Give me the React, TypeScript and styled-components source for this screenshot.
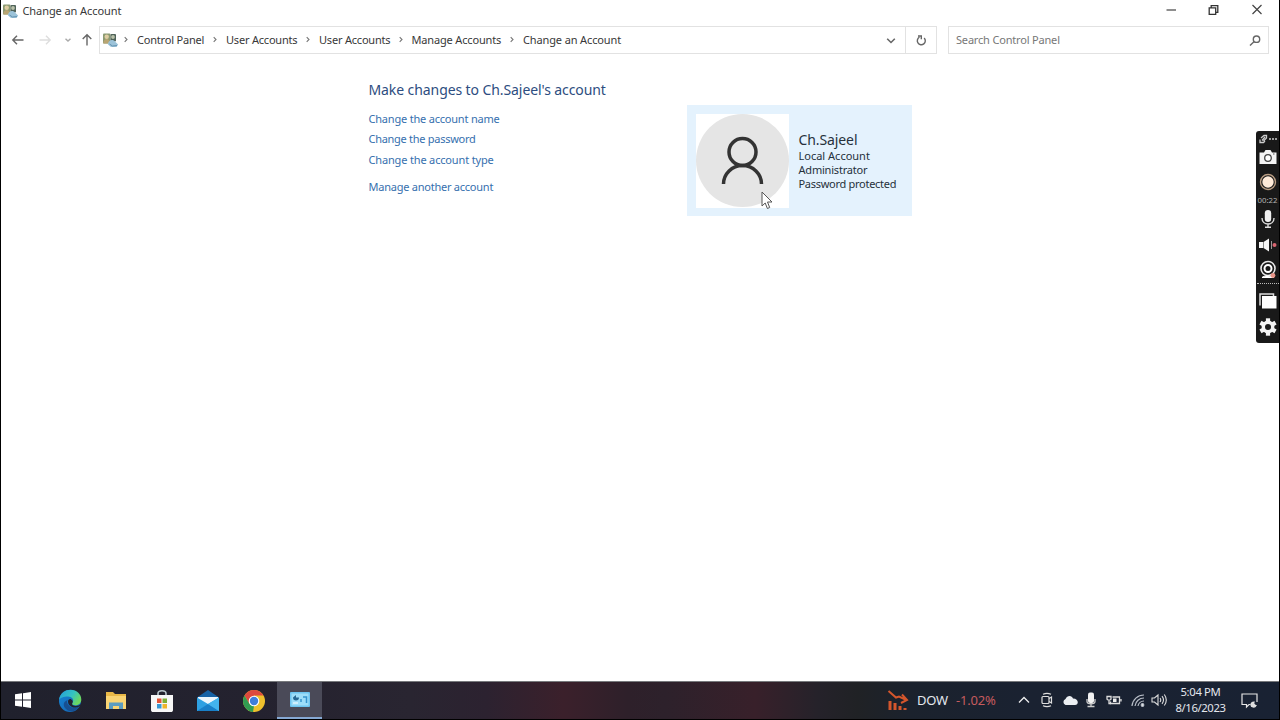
import React from 'react';
import styled, { createGlobalStyle } from 'styled-components';

const GlobalStyle = createGlobalStyle`
  *, *::before, *::after { box-sizing: border-box; }
  body { margin: 0; background: #000; overflow: hidden; }
  svg { display: block; flex: none; }
`;

const Screen = styled.div`
  position: relative;
  width: 1280px;
  height: 720px;
  display: flex;
  flex-direction: column;
  padding: 0 1px 1px;
  background: #000;
  font-family: "Noto Sans", "Open Sans", sans-serif;
  font-size: 11px;
  color: #383838;
`;

const Window = styled.div`
  height: 681px;
  flex: none;
  display: flex;
  flex-direction: column;
  background: #fff;
`;

const Label = styled.span<{ $spacing?: number }>`
  white-space: nowrap;
  letter-spacing: ${(p) => p.$spacing ?? 0}px;
`;

const TitleBar = styled.header`
  height: 22px;
  display: flex;
  align-items: center;
  padding-left: 1px;
  gap: 3.5px;
  line-height: 22px;
`;

const WindowButtons = styled.div`
  display: flex;
  align-items: center;
  margin-left: auto;
  padding: 0 16px 2px 0;
  gap: 31px;
`;

const NavBar = styled.nav`
  height: 32px;
  display: flex;
  align-items: flex-end;
  padding-right: 10px;
`;

const NavArrows = styled.div`
  width: 98px;
  height: 28px;
  flex: none;
  display: flex;
  align-items: center;
  padding-left: 10px;
`;

const ArrowSlot = styled.span<{ $width: number }>`
  width: ${(p) => p.$width}px;
  display: flex;
`;

const AddressBox = styled.div`
  width: 838px;
  height: 28px;
  display: flex;
  align-items: center;
  border: 1px solid #e2e2e2;
  padding-left: 2px;
`;

const Crumb = styled.span<{ $width: number }>`
  width: ${(p) => p.$width}px;
  flex: none;
  display: flex;
  align-items: center;
  gap: 9px;
  line-height: 16px;
  padding-bottom: 1px;
`;

const DropButton = styled.span`
  margin-left: auto;
  width: 28px;
  display: flex;
  justify-content: center;
`;

const RefreshButton = styled.span`
  width: 31px;
  height: 26px;
  display: flex;
  align-items: center;
  justify-content: center;
  border-left: 1px solid #e2e2e2;
`;

const SearchBox = styled.div`
  width: 321px;
  height: 28px;
  margin-left: auto;
  display: flex;
  align-items: center;
  justify-content: space-between;
  border: 1px solid #e2e2e2;
  padding: 0 7px 1px;
  color: #777;
`;

const Content = styled.main`
  flex: 1;
  display: flex;
  align-items: flex-start;
  padding-left: 367.5px;
`;

const Tasks = styled.section`
  width: 318.5px;
  padding-top: 26px;
  display: flex;
  flex-direction: column;
`;

const Heading = styled.h1`
  margin: 0 0 8.500px;
  font-size: 14px;
  font-weight: 400;
  line-height: 20px;
  color: #2d4d80;
  white-space: nowrap;
  letter-spacing: -0.09px;
`;

const TaskLink = styled.a<{ $last?: boolean; $spacing?: number }>`
  height: 20.7px;
  line-height: 20.7px;
  margin-top: ${(p) => (p.$last ? 6 : 0)}px;
  color: #366fae;
  white-space: nowrap;
  letter-spacing: ${(p) => p.$spacing ?? -0.2}px;
`;

const AccountCard = styled.section`
  width: 225px;
  height: 111px;
  margin-top: 51px;
  display: flex;
  background: #e4f2fd;
  padding: 9px 0 0 9px;
`;

const Picture = styled.div`
  width: 93px;
  height: 94px;
  background: #fff;
  flex: none;
`;

const AccountInfo = styled.div`
  padding: 17px 0 0 9.500px;
  display: flex;
  flex-direction: column;
  line-height: 14px;
  color: #26313b;
`;

const AccountName = styled.span`
  font-size: 14px;
  line-height: 18px;
  letter-spacing: -0.1px;
`;

const Pointer = styled.div`
  position: absolute;
  left: 761px;
  top: 191px;
`;

const Recorder = styled.aside`
  position: absolute;
  left: 1256px;
  top: 131px;
  width: 23px;
  height: 212px;
  border-radius: 3px 0 0 3px;
  background: #191919;
  display: flex;
  flex-direction: column;
  align-items: center;
  color: #ddd;
`;

const RecorderItem = styled.span<{ $height: number }>`
  width: 23px;
  height: ${(p) => p.$height}px;
  flex: none;
  display: flex;
  align-items: center;
  justify-content: center;
`;

const RecorderTime = styled.span`
  height: 10px;
  font-size: 7.8px;
  line-height: 10px;
  color: #b5b5b5;
`;

const RecorderRule = styled.span`
  width: 22px;
  border-top: 1px dotted #bbb;
`;

const Taskbar = styled.footer`
  height: 38px;
  flex: none;
  display: flex;
  border-top: 1px solid #77797c;
  background: linear-gradient(90deg, #20212d 0%, #24222f 20%, #292531 32%, #2c2230 38%, #3b202b 44%, #2e202a 49%, #2d212b 52%, #38202a 59%, #25222a 64%, #202225 67%, #1b222d 71%, #1a2231 80%, #192233 100%);
  color: #e4e7ee;
`;

const TaskButton = styled.span<{ $active?: boolean }>`
  width: ${(p) => (p.$active ? 45 : 46)}px;
  height: 37px;
  display: flex;
  align-items: center;
  justify-content: center;
  background: ${(p) => (p.$active ? '#4a4a58' : 'transparent')};
  border-bottom: ${(p) => (p.$active ? '2px solid #86a9d4' : '0')};
`;

const StartButton = styled(TaskButton)`
  width: 46px;
  padding: 0 3px 1px 0;
`;

const Stocks = styled.div`
  margin-left: auto;
  width: 126px;
  display: flex;
  align-items: center;
  font-size: 13px;
  padding-bottom: 1px;
`;

const StockSymbol = styled.span`
  margin-left: 8px;
  width: 39px;
  letter-spacing: -0.2px;
`;

const StockChange = styled.span`
  color: #c65b5e;
  white-space: nowrap;
  letter-spacing: -0.2px;
`;

const Tray = styled.div`
  display: flex;
  align-items: center;
  padding-bottom: 1px;
`;

const TrayItem = styled.span<{ $width: number }>`
  width: ${(p) => p.$width}px;
  display: flex;
  justify-content: center;
`;

const Clock = styled.div`
  width: 61px;
  display: flex;
  flex-direction: column;
  align-items: center;
  font-size: 11.3px;
  line-height: 16.5px;
  white-space: nowrap;
`;

const Notifications = styled.span`
  width: 44px;
  margin-right: 4px;
  padding-right: 8px;
  display: flex;
  align-items: center;
  justify-content: center;
`;

function UsersIcon() {
  return (
    <svg width="17" height="16" viewBox="0 0 17 16">
      <rect x="1" y="1.500" width="7.500" height="10" rx="1" fill="#8b9a72" />
      <path d="M1.200 11.500c0-6 7-6 7 0z" fill="#b9a572" />
      <circle cx="4.700" cy="4.800" r="2.200" fill="#decda2" />
      <rect x="8.500" y="2" width="5.500" height="7.500" rx="1" fill="#4f6259" />
      <circle cx="11" cy="5" r="1.900" fill="#b9c1a9" />
      <path d="M6 12.500c0-4.500 5-6 7.500-2.500l2.700 2.500-1.700 2.500H9z" fill="#9cc3d9" />
      <path d="m7.500 12 3 2 4.500-.5" stroke="#6593b1" fill="none" />
    </svg>
  );
}

function CrumbChevron() {
  return (
    <svg width="4" height="7" viewBox="0 0 4 7" fill="none" stroke="#777" strokeWidth="1.1">
      <path d="M.7 1.200 3 3.500.7 5.800" />
    </svg>
  );
}

function Arrow({ rotate = 0, color = '#666' }: { rotate?: number; color?: string }) {
  return (
    <svg width="14" height="14" viewBox="0 0 14 14" fill="none" stroke={color} strokeWidth="1.4">
      <path transform={`rotate(${rotate} 7 7)`} d="M12.500 7H2M6 2.700 1.800 7 6 11.300" />
    </svg>
  );
}

const crumbs: { text: string; width: number; spacing: number }[] = [
  { text: 'Control Panel', width: 89, spacing: -0.2 },
  { text: 'User Accounts', width: 93, spacing: -0.2 },
  { text: 'User Accounts', width: 92.5, spacing: -0.2 },
  { text: 'Manage Accounts', width: 111.5, spacing: -0.16 },
  { text: 'Change an Account', width: 120, spacing: -0.13 },
];

function Header() {
  return (
    <>
      <TitleBar>
        <UsersIcon />
        <Label $spacing={-0.08}>Change an Account</Label>
        <WindowButtons>
          <svg width="12" height="12" viewBox="0 0 12 12" stroke="#444" strokeWidth="1.2"><path d="M1.500 6h9.500" /></svg>
          <svg width="12" height="12" viewBox="0 0 12 12" fill="none" stroke="#333" strokeWidth="1.3"><path d="M1.200 3.800h6.500v6.500H1.200zM3.200 3.500V1.700h6.600v6.600H8" /></svg>
          <svg width="12" height="12" viewBox="0 0 12 12" stroke="#444" strokeWidth="1.2"><path d="m1.500 1 9 9m0-9-9 9" /></svg>
        </WindowButtons>
      </TitleBar>
      <NavBar>
        <NavArrows>
          <ArrowSlot $width={27}><Arrow /></ArrowSlot>
          <ArrowSlot $width={26}><Arrow rotate={180} color="#dedede" /></ArrowSlot>
          <ArrowSlot $width={16}>
            <svg width="8" height="6" viewBox="0 0 8 6" fill="none" stroke="#aaa" strokeWidth="1.4"><path d="M1.500 1.700 4 4l2.500-2.300" /></svg>
          </ArrowSlot>
          <ArrowSlot $width={14}><Arrow rotate={90} /></ArrowSlot>
        </NavArrows>
        <AddressBox>
          <ArrowSlot $width={22}><UsersIcon /></ArrowSlot>
          {crumbs.map((c, i) => (
            <Crumb key={i} $width={c.width}>
              <CrumbChevron />
              <Label $spacing={c.spacing}>{c.text}</Label>
            </Crumb>
          ))}
          <DropButton>
            <svg width="10" height="7" viewBox="0 0 10 7" fill="none" stroke="#666" strokeWidth="1.6"><path d="m1.200 1.800 3.800 3.700 3.800-3.700" /></svg>
          </DropButton>
          <RefreshButton>
            <svg width="12" height="12" viewBox="0 0 12 12" fill="none" stroke="#666" strokeWidth="1.4"><path d="M9.200 4A4 4 0 1 1 4.500 3.200M3 2h3.300v3.200" /></svg>
          </RefreshButton>
        </AddressBox>
        <SearchBox>
          <Label $spacing={-0.18}>Search Control Panel</Label>
          <svg width="12" height="12" viewBox="0 0 12 12" fill="none" stroke="#666" strokeWidth="1.4"><circle cx="7.500" cy="5.200" r="3.200" /><path d="M5.200 7.600 1 11.500" /></svg>
        </SearchBox>
      </NavBar>
    </>
  );
}

function RecorderBar() {
  return (
    <Recorder>
      <RecorderItem $height={15}>
        <svg width="20" height="10" viewBox="0 0 20 10" fill="none" stroke="#ccc">
          <path d="M3 4 6 1.500h2.500V4L5.500 7M2 5.500v3h3.500L7 7M4 6.500l3-3.500" strokeWidth="1.300" />
          <path d="M11 5h8" strokeWidth="1.700" strokeDasharray="2 1" />
        </svg>
      </RecorderItem>
      <RecorderItem $height={22}>
        <svg width="18" height="16" viewBox="0 0 18 16"><path d="M.5 3.500H5L6.500 1h5L13 3.500h4.500V15H.5z" fill="#f4f4f4" /><circle cx="9" cy="9" r="3.300" fill="#fff" stroke="#444" strokeWidth="1.300" /><path d="M14 5h1.500" stroke="#555" /></svg>
      </RecorderItem>
      <RecorderItem $height={27}>
        <svg width="18" height="18" viewBox="0 0 18 18"><circle cx="9" cy="9" r="7.500" fill="#191919" stroke="#b99d83" strokeWidth="1.400" /><circle cx="9" cy="9" r="5.700" fill="#ffebd9" /></svg>
      </RecorderItem>
      <RecorderTime>00:22</RecorderTime>
      <RecorderItem $height={28}>
        <svg width="16" height="20" viewBox="0 0 16 20" fill="none"><rect x="4.800" y="1" width="6.400" height="12" rx="3.200" fill="#f0f0f0" /><path d="M2 9c0 8 12 8 12 0M8 15v3M5 18.300h6" stroke="#ddd" strokeWidth="1.400" /></svg>
      </RecorderItem>
      <RecorderItem $height={23}>
        <svg width="20" height="14" viewBox="0 0 20 14"><path d="M1 4h4v6H1zM5.500 4 11 .5v13L5.500 10z" fill="#f4f4f4" /><path d="M13.500 3v8" stroke="#999" /><circle cx="16.500" cy="7" r="2" fill="#d96570" /></svg>
      </RecorderItem>
      <RecorderItem $height={27}>
        <svg width="18" height="20" viewBox="0 0 18 20" fill="none"><circle cx="9" cy="8.500" r="7" stroke="#e8e8e8" strokeWidth="1.600" /><circle cx="9" cy="8.500" r="3.500" stroke="#fff" strokeWidth="2" /><path d="M3 17.500c2-2 9-2 12 0z" fill="#fff" stroke="#fff" /><circle cx="14" cy="15.500" r="2.400" fill="#e99589" /></svg>
      </RecorderItem>
      <RecorderRule />
      <RecorderItem $height={33}>
        <svg width="18" height="16" viewBox="0 0 18 16"><path d="M1 12.500V1h13.500v2" fill="none" stroke="#ddd" strokeWidth="1.500" /><rect x="3" y="3" width="14.500" height="12.500" fill="#fff" /></svg>
      </RecorderItem>
      <RecorderItem $height={19}>
        <svg width="18" height="18" viewBox="0 0 18 18" fill="none" stroke="#f4f4f4">
          <circle cx="9" cy="9" r="4.700" strokeWidth="3.400" />
          {[0, 60, 120, 180, 240, 300].map((a) => <path key={a} d="M9 .3v3.500" strokeWidth="4.200" transform={`rotate(${a} 9 9)`} />)}
        </svg>
      </RecorderItem>
    </Recorder>
  );
}

function TaskbarView() {
  return (
    <Taskbar>
      <StartButton>
        <svg width="16" height="16" viewBox="0 0 16 16" fill="#fff"><path d="M0 2.200 7 1.300v6.200H0zM8 1.200 16 0v7.500H8zM0 8.500h7v6.200l-7-.9zM8 8.500h8V16l-8-1.200z" /></svg>
      </StartButton>
      <TaskButton>
        <svg width="24" height="24" viewBox="0 0 24 24">
          <defs>
            <linearGradient id="edgeTop" x1="0" y1="0" x2="1" y2="0.500"><stop offset="0" stopColor="#249bdb" /><stop offset="0.600" stopColor="#34c2c2" /><stop offset="1" stopColor="#6bd761" /></linearGradient>
            <linearGradient id="edgeBase" x1="0" y1="0" x2="1" y2="1"><stop offset="0" stopColor="#1686d7" /><stop offset="1" stopColor="#1560ab" /></linearGradient>
          </defs>
          <circle cx="12" cy="12" r="11" fill="url(#edgeBase)" />
          <path d="M1 11C2 4 7 .8 12.500.8 19 .8 23.300 5.500 23.300 10.500c0 4-3 5.800-6 5.800-2.500 0-4-1-3-2.300 2.500-3.500-.5-6.500-4.300-6.500C5.500 7.500 2 9 1 11z" fill="url(#edgeTop)" />
          <path d="M9 12c0 5 5 8.500 12 6-4 6-11 5-14 1-2.500-3.500-1-7 3-8z" fill="#174f91" />
          <path d="M14.600 13.500c-1.500 2.500 1 3.500 3.400 3.500 2 0 3.500-.7 5-2-1 3-3 3-5 3.500-5 .5-8-3-8-6 0-2 2-3 3.300-2 1.500.8 1.700 2 1.300 3z" fill="#222331" />
        </svg>
      </TaskButton>
      <TaskButton>
        <svg width="22" height="20" viewBox="0 0 22 20"><path d="M1 1h7l2 2h11v15H1z" fill="#e9b847" /><path d="M1 5h20v13H1z" fill="#f9d473" /><path d="M4 18v-6.500h14V18h-4v-3H8v3z" fill="#5b9cc0" /></svg>
      </TaskButton>
      <TaskButton>
        <svg width="22" height="24" viewBox="0 0 22 24"><path d="M7 7V4.500C7 .8 15 .8 15 4.500V7" fill="none" stroke="#b9c5cc" strokeWidth="1.600" /><path d="M0 6h22v15c0 1.500-1 2-2 2H2c-1 0-2-.5-2-2z" fill="#f7f7f7" /><path d="M6 9.500h4.500V14H6z" fill="#e45336" /><path d="M11.500 9.500H16V14h-4.500z" fill="#7caf37" /><path d="M6 15h4.500v4.500H6z" fill="#3699d5" /><path d="M11.500 15H16v4.500h-4.500z" fill="#efb42c" /></svg>
      </TaskButton>
      <TaskButton>
        <svg width="24" height="24" viewBox="0 0 24 24"><path d="M1 8.500 12 1l11 7.500v4H1z" fill="#1662a5" /><path d="M2 8h20v9H2z" fill="#edf6fc" /><path d="M1 8.500V22h22V8.500L12 15z" fill="#2ea0e2" /><path d="m1 22 11-7 11 7z" fill="#197fc8" /><path d="M23 8.500V22l-11-7z" fill="#43b4ed" /></svg>
      </TaskButton>
      <TaskButton>
        <svg width="24" height="24" viewBox="0 0 24 24"><circle cx="12" cy="12" r="11" fill="#eec02d" /><path d="M2.500 6.500A11 11 0 0 1 21.500 6.500H12L7.300 15z" fill="#dd493d" /><path d="M2.500 6.500 7.500 15 12 17l-1 6A11 11 0 0 1 2.500 6.500z" fill="#319c52" /><circle cx="12" cy="12" r="5.300" fill="#fff" /><circle cx="12" cy="12" r="4.200" fill="#3f7edb" /></svg>
      </TaskButton>
      <TaskButton $active>
        <svg width="20" height="15" viewBox="0 0 20 15"><rect width="20" height="15" rx="1" fill="#6ec5f0" /><rect x="1.500" y="1.500" width="17" height="12" fill="#9dddf8" /><path d="M3 5.500 6 3v2.500h3A3 3 0 0 1 3 5.500z" fill="#286893" /><path d="M11 10V7M13 5h3.500v6" fill="none" stroke="#3694cd" strokeWidth="1.500" /><path d="M3 11h5" stroke="#fff" /></svg>
      </TaskButton>
      <Stocks>
        <svg width="22" height="22" viewBox="0 0 22 22" fill="none" stroke="#d4562c"><path d="M1.500 2 9 8.500l3-1 7.500 3.500M15 5.500l5 5.500-6 3" strokeWidth="2" /><path d="M3 21v-9M8 21v-7M13 21v-4M18 21v-2" strokeWidth="3" /></svg>
        <StockSymbol>DOW</StockSymbol>
        <StockChange>-1.02%</StockChange>
      </Stocks>
      <Tray>
        <TrayItem $width={22}><svg width="12" height="8" viewBox="0 0 12 8" fill="none" stroke="#eee" strokeWidth="1.300"><path d="m1 6.500 5-5 5 5" /></svg></TrayItem>
        <TrayItem $width={24}><svg width="12" height="16" viewBox="0 0 12 16" fill="none" stroke="#ddd" strokeWidth="1.200"><rect x="1" y="4.500" width="7" height="7" rx="1" /><path d="M8 6.500 10.500 5v6L8 9.500M2 2.200q4-1.700 8 0M2 13.800q4 1.700 8 0" /></svg></TrayItem>
        <TrayItem $width={21}><svg width="16" height="11" viewBox="0 0 16 11"><path d="M3.500 10a3.200 3.200 0 0 1 0-6C5 0 10 0 11 3.500c6 0 6 6.500 2 6.500z" fill="#eceff2" /></svg></TrayItem>
        <TrayItem $width={22}><svg width="10" height="16" viewBox="0 0 10 16"><rect x="2" y="0.500" width="6" height="10.500" rx="2" fill="#f2f2f2" /><path d="M1 7v2.500C1 12.500 9 12.500 9 9.500V7M5 11v3M1.500 14.500h7" fill="none" stroke="#ccc" strokeWidth="1.300" /></svg></TrayItem>
        <TrayItem $width={24}><svg width="16" height="12" viewBox="0 0 16 12" fill="none" stroke="#ddd" strokeWidth="1.300"><path d="M6.500 3h7v6.500h-9V7.500M15 5v2.500" /><path d="M1 2.500h4v2.200c0 2-4 2-4 0zM3 6v3.500h2" /><path d="M7 4.500h3.500V8H7z" fill="#eee" stroke="none" /></svg></TrayItem>
        <TrayItem $width={23}><svg width="14" height="14" viewBox="0 0 14 14" fill="none" stroke="#b8bec7" strokeWidth="1.200"><path d="M1 13A12 12 0 0 1 13 2M4 13a9 9 0 0 1 9-8M7 13a6 6 0 0 1 6-5" /><circle cx="11.500" cy="12" r="1.300" fill="#eee" /></svg></TrayItem>
        <TrayItem $width={21}><svg width="17" height="14" viewBox="0 0 17 14" fill="none" stroke="#ddd" strokeWidth="1.100"><path d="M1 5h2.500L7 2v10L3.500 9H1zM9 5q1.500 2 0 4M11 3.200q3 3.800 0 7.600M13.300 1.500q4 5.500 0 11" /></svg></TrayItem>
        <Clock><Label $spacing={-0.35}>5:04 PM</Label><Label $spacing={-0.4}>8/16/2023</Label></Clock>
        <Notifications><svg width="17" height="17" viewBox="0 0 17 17" fill="none" stroke="#e5e5e5" strokeWidth="1.200"><path d="M9.500 12.500H8l-2.500 2.500v-2.500H1V2h15v8" /><path d="M10 13q0-3 3-3-1 3 2 3.500-1 2-3 1.500-2-.5-2-2z" fill="#ddd" /></svg></Notifications>
      </Tray>
    </Taskbar>
  );
}

export default function App() {
  return (
    <Screen>
      <GlobalStyle />
      <Window>
        <Header />
        <Content>
          <Tasks>
            <Heading>Make changes to Ch.Sajeel's account</Heading>
            <TaskLink>Change the account name</TaskLink>
            <TaskLink $spacing={-0.28}>Change the password</TaskLink>
            <TaskLink $spacing={-0.16}>Change the account type</TaskLink>
            <TaskLink $last $spacing={-0.24}>Manage another account</TaskLink>
          </Tasks>
          <AccountCard>
            <Picture>
              <svg width="93" height="94" viewBox="0 0 93 94" fill="none" stroke="#333" strokeWidth="3.500"><circle cx="46.500" cy="46.500" r="46.500" fill="#e5e5e5" stroke="none" /><circle cx="46.500" cy="38" r="13.500" /><path d="M27.500 70a19 18.500 0 0 1 38 0" /></svg>
            </Picture>
            <AccountInfo>
              <AccountName>Ch.Sajeel</AccountName>
              <Label>Local Account</Label>
              <Label $spacing={-0.2}>Administrator</Label>
              <Label $spacing={-0.28}>Password protected</Label>
            </AccountInfo>
          </AccountCard>
        </Content>
      </Window>
      <TaskbarView />
      <RecorderBar />
      <Pointer>
        <svg width="12" height="19" viewBox="0 0 12 19"><path d="M1 1v14l3.200-3 2.200 5.500 2.300-1L6.500 11H11z" fill="#fff" stroke="#555" strokeWidth="1" /></svg>
      </Pointer>
    </Screen>
  );
}
